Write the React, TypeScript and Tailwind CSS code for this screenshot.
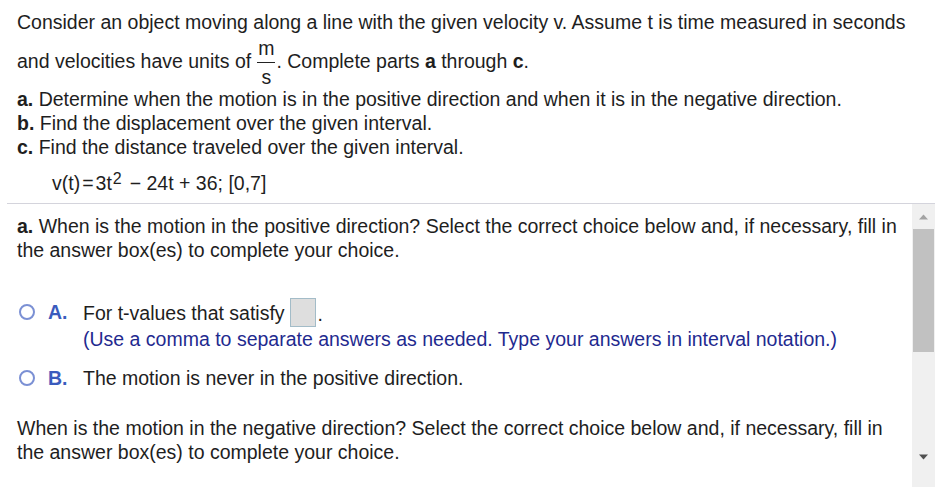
import React from 'react';

const Radio = () => (
  <span className="inline-block w-[16px] h-[16px] rounded-full border-2 border-[#7b90d4] bg-white shrink-0" />
);

export default function App() {
  return (
    <div
      className="w-[937px] h-[487px] overflow-hidden bg-white text-[19.5px] text-[#1e1e1e] flex flex-col"
      style={{ fontFamily: '"Liberation Sans", Arial, sans-serif' }}
    >
      {/* Question stem */}
      <div className="pl-[17px] pt-[10px]">
        <div className="leading-[24px] whitespace-nowrap">
          Consider an object moving along a line with the given velocity v. Assume t is time measured in seconds
        </div>
        <div className="mt-[3px] h-[50px] flex items-center whitespace-nowrap">
          <span>and velocities have units of</span>
          <span className="inline-flex flex-col items-center ml-[6px] mr-[1px] mt-[1px]">
            <span className="leading-[28px] px-[1px]">m</span>
            <span className="block w-full h-[1px] bg-[#222]" />
            <span className="leading-[29px]">s</span>
          </span>
          <span>
            . Complete parts <b>a</b> through <b>c</b>.
          </span>
        </div>
        <div className="leading-[24px] whitespace-nowrap">
          <b>a.</b> Determine when the motion is in the positive direction and when it is in the negative direction.
        </div>
        <div className="leading-[24px] whitespace-nowrap">
          <b>b.</b> Find the displacement over the given interval.
        </div>
        <div className="leading-[24px] whitespace-nowrap">
          <b>c.</b> Find the distance traveled over the given interval.
        </div>
        <div className="mt-[12px] pl-[35px] h-[24px] leading-[24px] whitespace-nowrap">
          v(t)<span className="mx-[2px]">=</span>3t
          <span className="text-[16px] leading-none relative top-[-6px] ml-[1px]">2</span>
          <span className="ml-[8px]">− 24t + 36; [0,7]</span>
        </div>
      </div>

      <div className="mt-[8px] ml-[7px] mr-[2px] border-t border-[#d4d4dc]" />

      {/* Answer area */}
      <div className="flex-1 flex min-h-0">
        <div className="flex-1 pl-[17px] pt-[10px]">
          <div className="leading-[24px] whitespace-nowrap">
            <b>a.</b> When is the motion in the positive direction? Select the correct choice below and, if necessary, fill in
            <br />
            the answer box(es) to complete your choice.
          </div>

          <div className="mt-[36px] flex items-start">
            <div className="pl-[2px] w-[66px] flex items-center gap-[13px] pt-[4px]">
              <Radio />
              <span className="font-bold text-[#3a5bbd] leading-[20px]">A.</span>
            </div>
            <div>
              <div className="flex items-center h-[29px] whitespace-nowrap">
                <span className="leading-[24px] pt-[1px]">For t-values that satisfy</span>
                <span className="inline-block ml-[5px] w-[26px] h-[29px] bg-[#dedede] border border-[#a3bcc8]" />
                <span className="ml-[2px] pt-[4px]">.</span>
              </div>
              <div className="leading-[24px] text-[#1f2a8f] whitespace-nowrap">
                (Use a comma to separate answers as needed. Type your answers in interval notation.)
              </div>
            </div>
          </div>

          <div className="mt-[15px] flex items-center">
            <div className="pl-[2px] w-[66px] flex items-center gap-[13px]">
              <Radio />
              <span className="font-bold text-[#3a5bbd] leading-[24px]">B.</span>
            </div>
            <span className="leading-[24px] whitespace-nowrap">The motion is never in the positive direction.</span>
          </div>

          <div className="mt-[26px] leading-[24px] whitespace-nowrap">
            When is the motion in the negative direction? Select the correct choice below and, if necessary, fill in
            <br />
            the answer box(es) to complete your choice.
          </div>
        </div>

        {/* Scrollbar */}
        <div className="w-[23px] mr-[2px] bg-[#f0f0f0] flex flex-col items-center">
          <div className="h-[25px] flex items-center justify-center">
            <svg width="9" height="6" viewBox="0 0 9 6">
              <path d="M0 5.5 L4.5 0.5 L9 5.5 Z" fill="#a3a3a3" />
            </svg>
          </div>
          <div className="w-[21px] h-[123px] bg-[#c1c1c1]" />
          <div className="flex-1" />
          <div className="h-[40px] flex items-start justify-center pt-[7px]">
            <svg width="9" height="6" viewBox="0 0 9 6">
              <path d="M0 0.5 L4.5 5.5 L9 0.5 Z" fill="#505050" />
            </svg>
          </div>
        </div>
      </div>
    </div>
  );
}
